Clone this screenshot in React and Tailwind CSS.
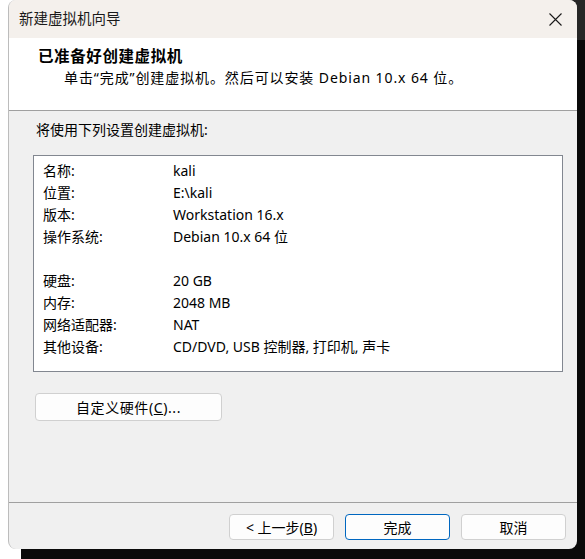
import React from 'react';

const rows = [
  { label: '名称:', value: 'kali' },
  { label: '位置:', value: 'E:\\kali' },
  { label: '版本:', value: 'Workstation 16.x' },
  { label: '操作系统:', value: 'Debian 10.x 64 位' },
  null,
  { label: '硬盘:', value: '20 GB' },
  { label: '内存:', value: '2048 MB' },
  { label: '网络适配器:', value: 'NAT' },
  { label: '其他设备:', value: 'CD/DVD, USB 控制器, 打印机, 声卡' },
];

function CloseIcon() {
  return (
    <svg width="13" height="13" viewBox="0 0 13 13" fill="none" stroke="#1a1a1a" strokeWidth="1.1">
      <path d="M0.5 0.5 L12.5 12.5 M12.5 0.5 L0.5 12.5" />
    </svg>
  );
}

function Button({ children, primary, className = '' }) {
  return (
    <button
      type="button"
      className={`h-[26px] w-[105px] rounded-[4px] bg-[#fdfdfd] text-[14px] text-black ${
        primary ? 'border border-[#0067c0]' : 'border border-[#d0d0d0]'
      } ${className}`}
    >
      {children}
    </button>
  );
}

export default function App() {
  return (
    <div className="relative h-[559px] w-[585px] overflow-hidden bg-[#0a0a0a] font-['Noto_Sans','Noto_Sans_CJK_SC',sans-serif]">
      {/* desktop behind the dialog */}
      <div className="absolute left-0 top-0 h-full w-[21px] bg-white" />
      <div className="absolute right-0 top-0 h-[40px] w-[20px] bg-[#262626]" />

      {/* the dialog window */}
      <div className="absolute left-[8px] top-0 flex h-[549px] w-[569px] flex-col overflow-hidden rounded-[8px] border-l border-[#bcbcbc] bg-[#f0f0f0]">
        <div className="flex h-[38px] shrink-0 items-center justify-between bg-[#f4f0ec] pl-[10px] pr-[15px]">
          <span className="text-[14.5px] text-[#1a1a1a]">新建虚拟机向导</span>
          <CloseIcon />
        </div>

        <div className="h-[72px] shrink-0 bg-white pt-[8px]">
          <div className="pl-[29px] text-[15.5px] font-bold leading-[20px] tracking-[0.6px] text-black">已准备好创建虚拟机</div>
          <div className="mt-[2px] pl-[55px] text-[14px] leading-[20px] tracking-[0.9px] text-black">
            单击“完成”创建虚拟机。然后可以安装 Debian 10.x 64 位。
          </div>
        </div>
        <div className="h-px shrink-0 bg-[#a0a0a0]" />

        <div className="flex flex-1 flex-col pt-[9px]">
          <div className="pl-[27px] text-[14px] leading-[20px] text-black">将使用下列设置创建虚拟机:</div>

          <div className="ml-[24px] mt-[15px] h-[217px] w-[530px] border border-[#828790] bg-white pt-[3px]">
            {rows.map((row, i) =>
              row ? (
                <div key={i} className="flex h-[22px] items-center text-[14px] text-black">
                  <span className="w-[139px] pl-[9px]">{row.label}</span>
                  <span>{row.value}</span>
                </div>
              ) : (
                <div key={i} className="h-[22px]" />
              )
            )}
          </div>

          <button
            type="button"
            className="ml-[26px] mt-[21px] h-[28px] w-[187px] rounded-[4px] border border-[#d0d0d0] bg-[#fdfdfd] text-[14px] tracking-[0.6px] text-black"
          >
            自定义硬件(<span className="underline">C</span>)...
          </button>

          <div className="flex-1" />
          <div className="h-px bg-[#a0a0a0]" />
          <div className="flex h-[46px] items-start justify-end gap-[11px] pr-[11px] pt-[11px]">
            <Button>
              &lt; 上一步(<span className="underline">B</span>)
            </Button>
            <Button primary>完成</Button>
            <Button>取消</Button>
          </div>
        </div>
      </div>
    </div>
  );
}
